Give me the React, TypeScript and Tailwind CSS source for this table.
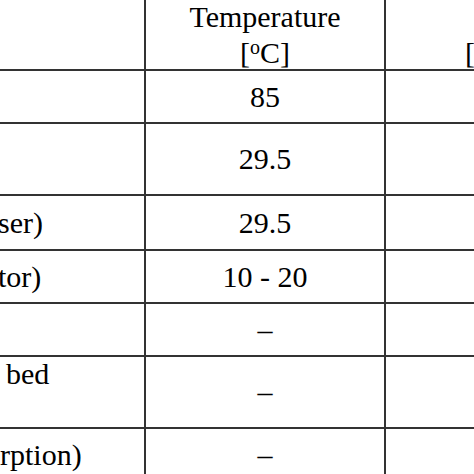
const rows = [
  { left: "", value: "85", h: "h-[51px]" },
  { left: "", value: "29.5", h: "h-[70px]" },
  { left: "ser)", value: "29.5", h: "h-[53px]", shift: "-ml-[2px]" },
  { left: "tor)", value: "10 - 20", h: "h-[51px]", shift: "-ml-[2px]" },
  { left: "", value: "\u2013", h: "h-[51px]" },
  { left: "bed", value: "\u2013", h: "h-[70px]", shift: "ml-[6px]", twoLine: true },
  { left: "rption)", value: "\u2013", h: "h-[52px]" },
];

export default function App() {
  return (
    <div
      className="h-[474px] w-[474px] overflow-hidden bg-white text-[30px] leading-[36px] text-black"
      style={{ fontFamily: '"Liberation Serif", "Times New Roman", serif' }}
    >
      <div className="grid w-[560px] grid-cols-[144px_238px_174px] gap-[2px] bg-[#333]">
        <div className="h-[69px] bg-white" />
        <div className="flex h-[69px] flex-col items-center bg-white">
          <div className="-mt-[1px]">Temperature</div>
          <div>
            [<span className="relative -top-[9px] text-[20px]">o</span>C]
          </div>
        </div>
        <div className="flex h-[69px] flex-col bg-white pl-[79px]">
          <div className="-mt-[1px]">&nbsp;</div>
          <div className="whitespace-nowrap">[mbar]</div>
        </div>

        {rows.map((r, i) => (
          <div key={i} className="contents">
            <div className={`flex items-center bg-white ${r.h}`}>
              <div className={`whitespace-nowrap ${r.shift ?? ""}`}>
                {r.twoLine ? (
                  <>
                    <div>{r.left}</div>
                    <div>&nbsp;</div>
                  </>
                ) : (
                  r.left
                )}
              </div>
            </div>
            <div className={`flex items-center justify-center bg-white ${r.h}`}>
              {r.value}
            </div>
            <div className={`bg-white ${r.h}`} />
          </div>
        ))}
      </div>
    </div>
  );
}
